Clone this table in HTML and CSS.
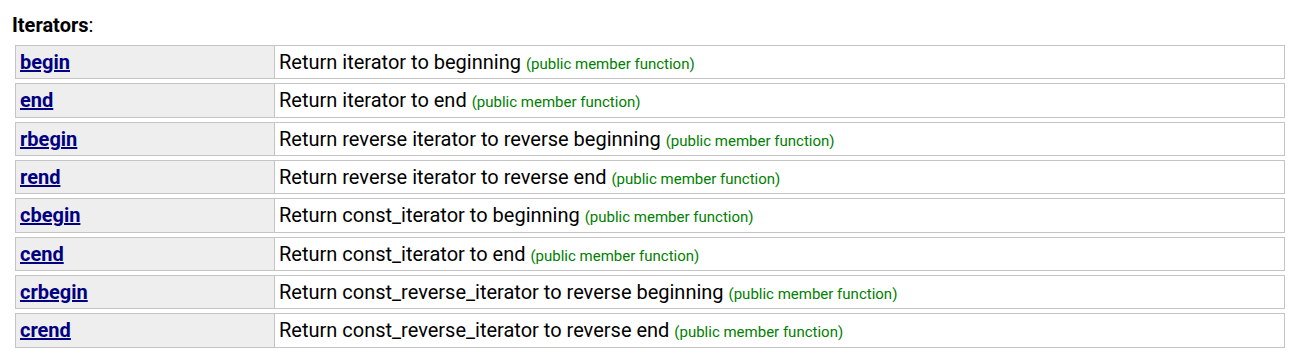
FILE: index.html
```html
<!DOCTYPE html>
<html>
<head>
<meta charset="utf-8">
<link rel="stylesheet" href="styles.css">
</head>
<body>
<div class="section">
  <div class="heading"><b>Iterators</b>:</div>
  <table class="links">
    <tr><td class="name"><a href="#">begin</a></td><td class="desc">Return iterator to beginning <span class="typ">(public member function)</span></td></tr>
    <tr><td class="name"><a href="#">end</a></td><td class="desc">Return iterator to end <span class="typ">(public member function)</span></td></tr>
    <tr><td class="name"><a href="#">rbegin</a></td><td class="desc">Return reverse iterator to reverse beginning <span class="typ">(public member function)</span></td></tr>
    <tr><td class="name"><a href="#">rend</a></td><td class="desc">Return reverse iterator to reverse end <span class="typ">(public member function)</span></td></tr>
    <tr><td class="name"><a href="#">cbegin</a></td><td class="desc">Return const_iterator to beginning <span class="typ">(public member function)</span></td></tr>
    <tr><td class="name"><a href="#">cend</a></td><td class="desc">Return const_iterator to end <span class="typ">(public member function)</span></td></tr>
    <tr><td class="name"><a href="#">crbegin</a></td><td class="desc">Return const_reverse_iterator to reverse beginning <span class="typ">(public member function)</span></td></tr>
    <tr><td class="name"><a href="#">crend</a></td><td class="desc">Return const_reverse_iterator to reverse end <span class="typ">(public member function)</span></td></tr>
  </table>
</div>
</body>
</html>
```
FILE: styles.css
```css
html, body {
  margin: 0;
  padding: 0;
  background: #fff;
}
body {
  font-family: Roboto, "Liberation Sans", sans-serif;
  font-size: 20px;
  color: #000;
}
.section {
  padding: 15px 0 0 12px;
}
.heading {
  font-size: 20px;
  line-height: 21px;
  margin-bottom: 5px;
}
.links {
  margin-left: 3px;
  width: 1270px;
  border-collapse: separate;
  border-spacing: 0 4px;
}
.links td {
  border: 1px solid #c4c4c4;
  padding: 4px 4px;
  height: 24.33px;
  line-height: 24.33px;
  vertical-align: middle;
}
.links td.name {
  width: 250px;
  background: #eeeeee;
  border-right: none;
}
.links td.name a {
  color: #000080;
  font-weight: bold;
  text-decoration: underline;
}
.links td.desc {
  background: #fff;
}
.typ {
  color: #008000;
  font-size: 15px;
  line-height: 1;
}
```
